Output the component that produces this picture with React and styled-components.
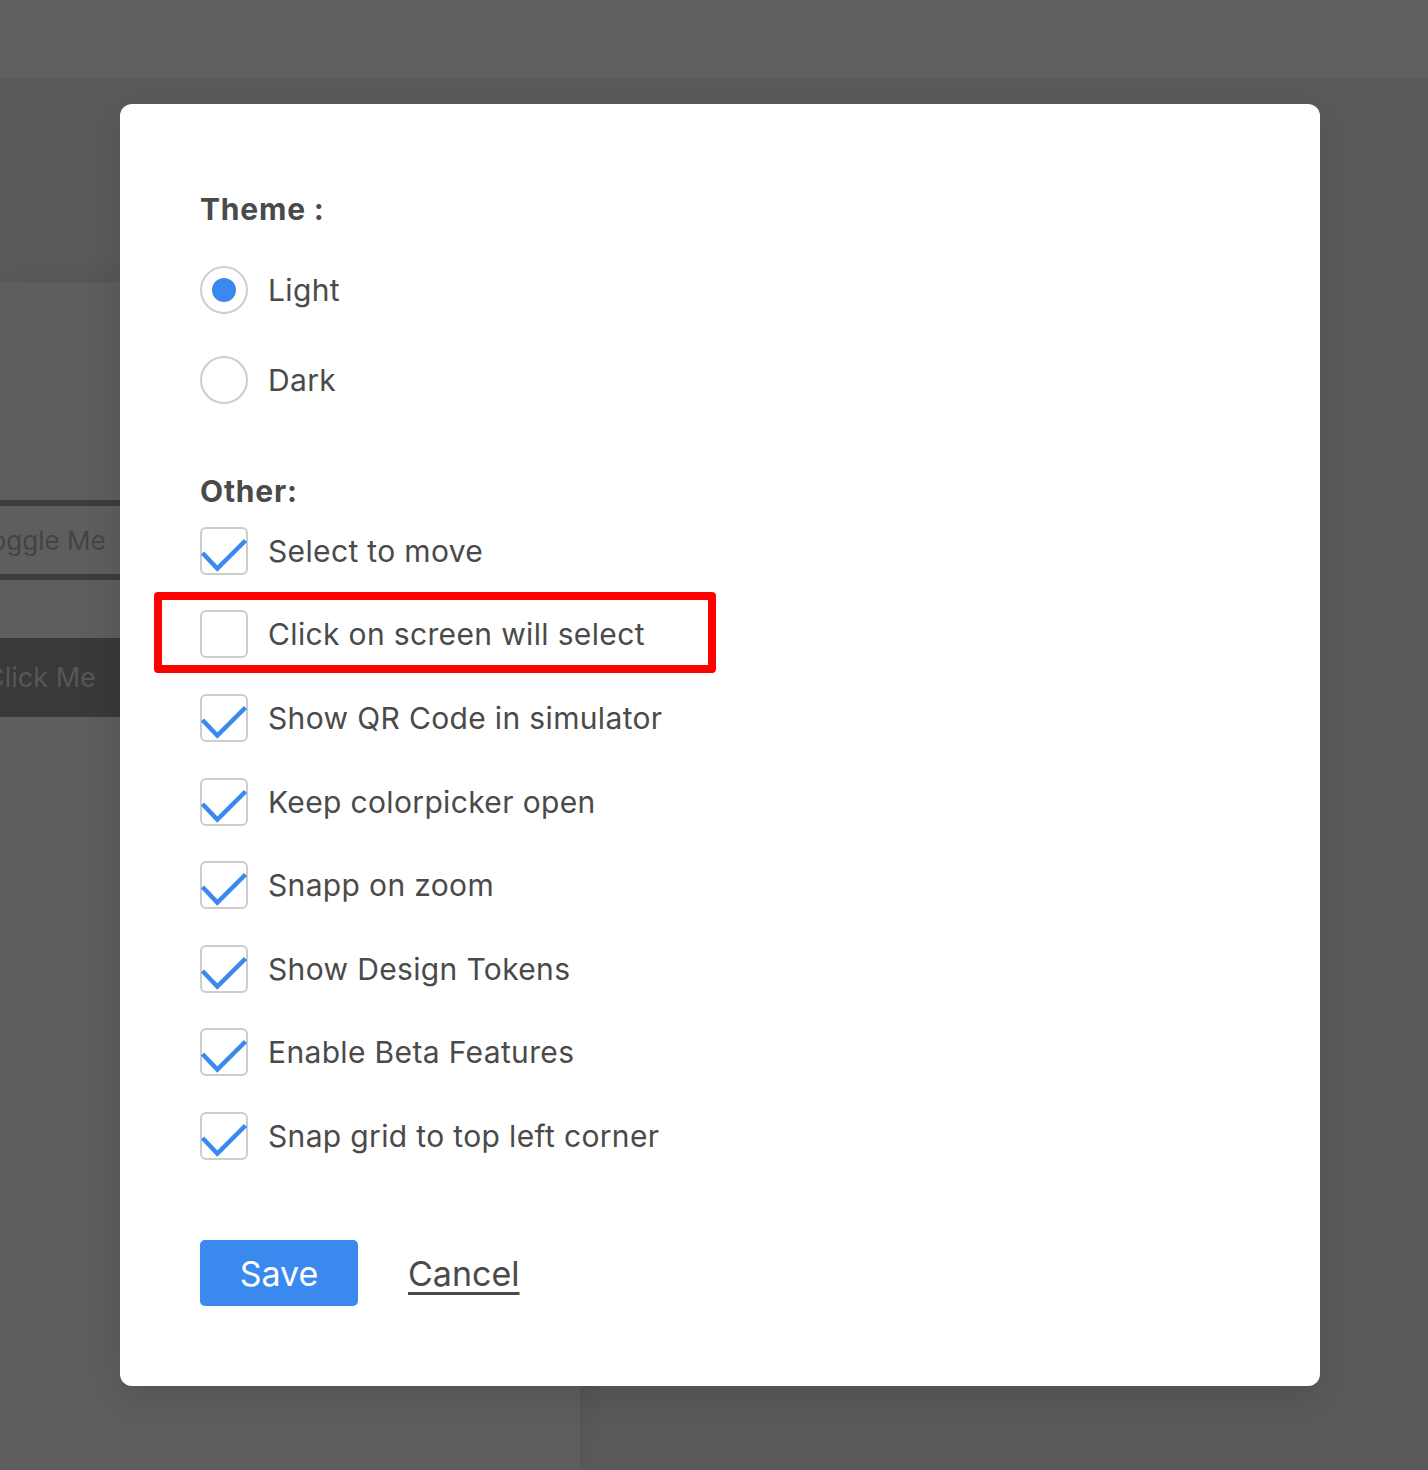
import React from 'react';
import styled, { createGlobalStyle, css } from 'styled-components';

const theme = {
  text: '#4a4a4a',
  blue: '#3a89ef',
  border: '#cdcdcd',
  font: "Inter, 'Noto Sans', 'Liberation Sans', sans-serif",
};

const GlobalStyle = createGlobalStyle`
  html, body {
    margin: 0;
    padding: 0;
    background: #5a5a5a;
    font-family: ${theme.font};
  }
  *, *::before, *::after { box-sizing: border-box; }
`;

const Page = styled.div`
  position: relative;
  width: 1428px;
  height: 1470px;
  overflow: hidden;
  display: flex;
  flex-direction: column;
`;

const TopBar = styled.header`
  height: 78px;
  flex-shrink: 0;
  background: #606060;
`;

const Workspace = styled.div`
  flex: 1;
  display: flex;
  padding-top: 204px;
`;

const SidePanel = styled.aside`
  width: 580px;
  background: #5e5e5e;
  box-shadow: 0 0 24px rgba(0, 0, 0, 0.08);
  display: flex;
  flex-direction: column;
  padding-top: 218px;
`;

const ToggleBar = styled.div`
  height: 80px;
  border-top: 6px solid #3c3c3c;
  border-bottom: 6px solid #3c3c3c;
  display: flex;
  align-items: center;

  span {
    margin-left: -24px;
    font-size: 26px;
    color: #444444;
    white-space: nowrap;
  }
`;

const ClickBlock = styled.div`
  margin-top: 58px;
  height: 79px;
  width: 400px;
  background: #393939;
  display: flex;
  align-items: center;

  span {
    margin-left: -15px;
    font-size: 27px;
    color: #575757;
    white-space: nowrap;
  }
`;

const Modal = styled.div`
  position: absolute;
  left: 120px;
  top: 104px;
  width: 1200px;
  height: 1282px;
  background: #ffffff;
  border-radius: 12px;
  box-shadow: 0 12px 40px rgba(0, 0, 0, 0.12);
  padding: 81px 80px 80px;
  display: flex;
  flex-direction: column;
  color: ${theme.text};
`;

const SectionTitle = styled.h3`
  margin: ${({ gap }) => gap || 0}px 0 0;
  height: 48px;
  display: flex;
  align-items: center;
  font-size: 30px;
  font-weight: 700;
  letter-spacing: 0.8px;
`;

const OptionRow = styled.label`
  position: relative;
  margin-top: ${({ gap }) => gap}px;
  height: 48px;
  display: flex;
  align-items: center;
  gap: 20px;
  font-size: 30px;
  letter-spacing: 0.35px;
  align-self: flex-start;

  ${({ highlighted }) => highlighted && css`
    &::after {
      content: '';
      position: absolute;
      left: -46px;
      top: -18px;
      width: 562px;
      height: 81px;
      border: 8px solid #ff0000;
      border-radius: 4px;
    }
  `}
`;

const Radio = styled.span`
  width: 48px;
  height: 48px;
  border-radius: 50%;
  border: 2px solid ${theme.border};
  display: flex;
  align-items: center;
  justify-content: center;

  &::before {
    content: '';
    width: 24px;
    height: 24px;
    border-radius: 50%;
    background: ${({ checked }) => (checked ? theme.blue : 'transparent')};
  }
`;

const Box = styled.span`
  position: relative;
  width: 48px;
  height: 48px;
  border-radius: 6px;
  border: 2px solid ${theme.border};

  svg {
    position: absolute;
    left: -2px;
    top: -2px;
  }
`;

const Actions = styled.div`
  margin-top: 80px;
  display: flex;
  align-items: center;
  gap: 50px;
`;

const SaveButton = styled.button`
  width: 158px;
  height: 66px;
  border: none;
  border-radius: 5px;
  background: ${theme.blue};
  color: #ffffff;
  font-family: ${theme.font};
  font-size: 34px;
  padding: 0;
`;

const CancelLink = styled.a`
  font-size: 34px;
  color: ${theme.text};
  text-decoration: underline;
  text-decoration-thickness: 2.5px;
  text-underline-offset: 6px;
`;

const Check = () => (
  <svg width="48" height="48" viewBox="0 0 48 48">
    <polyline
      points="2.5,26 17.3,41.5 45.5,13.5"
      fill="none"
      stroke={theme.blue}
      strokeWidth="4.5"
      strokeLinejoin="miter"
    />
  </svg>
);

const RadioOption = ({ label, checked, gap }) => (
  <OptionRow gap={gap}>
    <Radio checked={checked} />
    {label}
  </OptionRow>
);

const CheckOption = ({ label, checked, gap, highlighted }) => (
  <OptionRow gap={gap} highlighted={highlighted}>
    <Box>{checked && <Check />}</Box>
    {label}
  </OptionRow>
);

const options = [
  { label: 'Select to move', checked: true },
  { label: 'Click on screen will select', checked: false, highlighted: true },
  { label: 'Show QR Code in simulator', checked: true },
  { label: 'Keep colorpicker open', checked: true },
  { label: 'Snapp on zoom', checked: true },
  { label: 'Show Design Tokens', checked: true },
  { label: 'Enable Beta Features', checked: true },
  { label: 'Snap grid to top left corner', checked: true },
];

const App = () => (
  <Page>
    <GlobalStyle />
    <TopBar />
    <Workspace>
      <SidePanel>
        <ToggleBar><span>Toggle Me</span></ToggleBar>
        <ClickBlock><span>Click Me</span></ClickBlock>
      </SidePanel>
    </Workspace>
    <Modal>
      <SectionTitle>Theme :</SectionTitle>
      <RadioOption label="Light" checked gap={33} />
      <RadioOption label="Dark" gap={42} />
      <SectionTitle gap={63}>Other:</SectionTitle>
      {options.map((o, i) => (
        <CheckOption
          key={o.label}
          label={o.label}
          checked={o.checked}
          highlighted={o.highlighted}
          gap={i === 0 ? 12 : 35.6}
        />
      ))}
      <Actions>
        <SaveButton>Save</SaveButton>
        <CancelLink>Cancel</CancelLink>
      </Actions>
    </Modal>
  </Page>
);

export default App;
